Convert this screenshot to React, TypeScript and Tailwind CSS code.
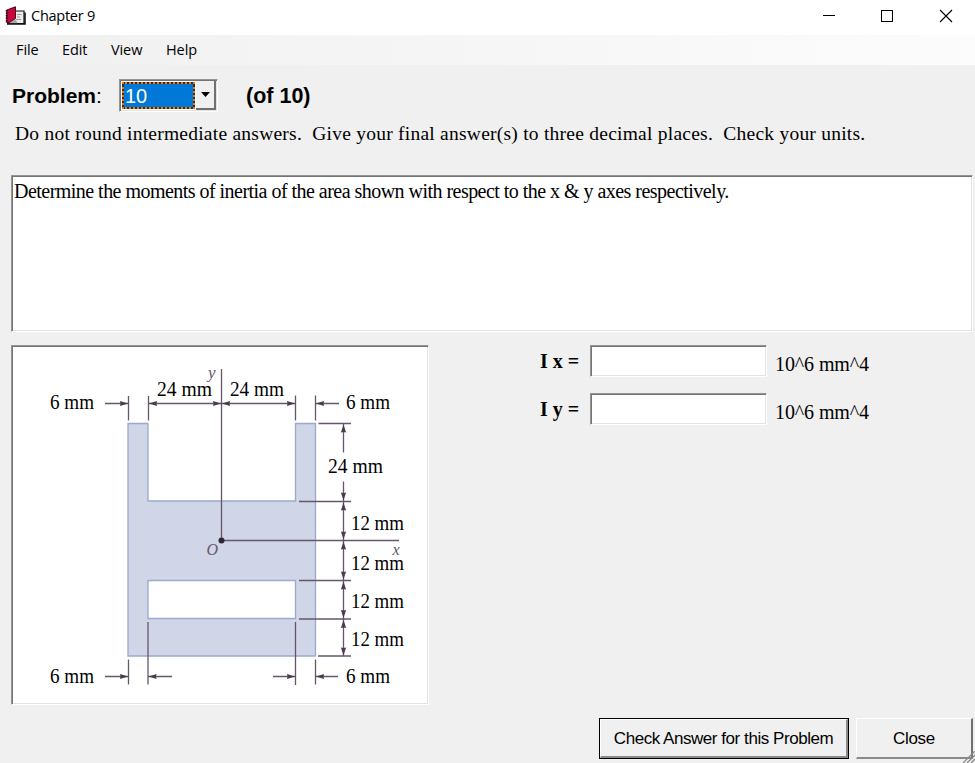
import { useState } from "react";
import clsx from "clsx";

interface MenuItem {
  label: string;
  className: string;
}

const menuItems: MenuItem[] = [
  { label: "File", className: "w-[46px] pl-4" },
  { label: "Edit", className: "w-[49px] pl-4" },
  { label: "View", className: "w-[55px] pl-4" },
  { label: "Help", className: "w-[60px] pl-4" },
];

// classic two-tone 3D edge: dark on top/left, light on bottom/right
const sunken =
  "border border-t-[#949494] border-l-[#949494] border-r-white border-b-white bg-white p-px shadow-[inset_1px_1px_0_#747474,inset_-1px_-1px_0_#e3e3e3]";

const BookIcon = () => (
  <svg width="22" height="20" viewBox="0 0 22 20" className="shrink-0">
    <path d="M10 5H19V17.5H3Z" fill="#ececec" stroke="#111" strokeWidth="1.2" />
    <path d="M12 8.5h4.5M12 11h3M11 13.5h5" stroke="#999" strokeWidth="1" />
    <path d="M4 17L10.5 13.5L13 17.5H4Z" fill="#a9a9a9" />
    <path d="M1.8 4L10.5 0.8V12.5L3.5 17L1.8 16Z" fill="#c9043f" stroke="#4b0516" strokeWidth="1" />
    <path d="M1.6 4V17" stroke="#111" strokeWidth="1.6" strokeDasharray="1.5 1" />
    <path d="M2 18H20V6.5" fill="none" stroke="#111" strokeWidth="1.6" />
  </svg>
);

const TitleBar = () => (
  <header className="flex h-[35px] shrink-0 items-start bg-white font-['Open_Sans','Noto_Sans',sans-serif]">
    <div className="flex items-center pt-[5px] pl-[5px]">
      <BookIcon />
      <span className="ml-1 pt-px text-[14.5px] leading-5 tracking-[-0.25px] text-black">Chapter 9</span>
    </div>
    <div className="ml-auto flex pt-[9px] pr-[21px]">
      <svg width="132" height="14" viewBox="822 9 132 14" shapeRendering="crispEdges" stroke="#000" fill="none">
        <path d="M823 15.5H835" />
        <rect x="881.5" y="10.5" width="11" height="11" />
        <path d="M940 10L952 22M952 10L940 22" shapeRendering="auto" strokeWidth="1.1" />
      </svg>
    </div>
  </header>
);

const MenuBar = () => (
  <nav className="flex h-[30px] shrink-0 items-center bg-linear-to-r from-[#f0f0f0] to-[#fcfcfc] font-['Open_Sans','Noto_Sans',sans-serif] text-[14.5px] leading-5 tracking-[-0.1px] text-black">
    {menuItems.map((item) => (
      <span key={item.label} className={item.className}>
        {item.label}
      </span>
    ))}
  </nav>
);

const ProblemPicker = () => (
  <div className="flex h-[33px] items-center pl-px font-['Liberation_Sans',Arial,sans-serif] text-black">
    <span className="w-[107px] text-[21px] font-bold">
      Problem<span className="font-normal">:</span>
    </span>
    <div className={clsx("flex h-[33px] w-[99px]", sunken)}>
      <div className="m-px h-[27px] w-[73px] bg-[#3d2c1a]">
        <div className="flex h-full items-center border-2 border-dotted border-[#e07a28] bg-[#0078d7] bg-clip-padding pl-px text-[20px] text-white">
          10
        </div>
      </div>
      <div className="flex flex-1 items-center justify-center border-r-2 border-b-2 border-[#707070] bg-[#f0f0f0]">
        <svg width="9" height="5" viewBox="0 0 9 5">
          <path d="M0 0H9L4.5 5Z" />
        </svg>
      </div>
    </div>
    <span className="ml-[28px] pt-px text-[21.5px] font-bold">(of 10)</span>
  </div>
);

type Direction = "left" | "right" | "up" | "down";

const Arrow = ({ x, y, dir }: { x: number; y: number; dir: Direction }) => {
  const angle = { right: 0, down: 90, left: 180, up: 270 }[dir];
  return (
    <path
      d="M0 0L-8 -2.6L-7.5 0L-8 2.6Z"
      fill="#4a3b4e"
      stroke="none"
      transform={`translate(${x} ${y}) rotate(${angle})`}
    />
  );
};

const dimensionLabels = [
  { x: 50, y: 409, text: "6 mm", width: 44 },
  { x: 157, y: 396, text: "24 mm", width: 55 },
  { x: 230, y: 396, text: "24 mm", width: 54 },
  { x: 346, y: 409, text: "6 mm", width: 44 },
  { x: 328, y: 472.5, text: "24 mm", width: 55 },
  { x: 351, y: 530, text: "12 mm", width: 53 },
  { x: 351, y: 570, text: "12 mm", width: 53 },
  { x: 351, y: 607.5, text: "12 mm", width: 53 },
  { x: 351, y: 646, text: "12 mm", width: 53 },
  { x: 50, y: 682.5, text: "6 mm", width: 44 },
  { x: 346, y: 682.5, text: "6 mm", width: 44 },
];

const SectionDiagram = () => (
  <svg width="414" height="356" viewBox="13 347 414 356" className="block">
    <path
      d="M128 423.5H148V501H295.5V423.5H315.5V656H128ZM148 580.5V618.5H295.5V580.5Z"
      fill="#d0d5e7"
      fillRule="evenodd"
      stroke="#9ba9cb"
      strokeWidth="1.3"
    />
    <g stroke="#66566c" strokeWidth="1.3" fill="none">
      {/* axes */}
      <path d="M221.5 369V541M221.5 540.5H399" />
      {/* extension lines */}
      <path d="M128.5 396V420.5M148.5 396V420.5M295.5 395.5V420.5M315.5 395.5V420.5" />
      <path d="M318.5 423.5H351M299 501.5H351M299 580.5H351M299 619H351M318 656H351" />
      <path d="M128.5 659.5V684.5M148 622V684.5M295.5 622V685M315.5 659.5V684.5" />
      {/* dimension lines */}
      <path d="M105 403.5H128M149 403.5H295M316 403.5H339" />
      <path d="M343.5 424V452.5M343.5 481.5V656" />
      <path d="M105 676.5H128M148 676.5H172M273 676.5H295M316 676.5H338" />
    </g>
    <Arrow x={128} y={403.5} dir="right" />
    <Arrow x={149} y={403.5} dir="left" />
    <Arrow x={221} y={403.5} dir="right" />
    <Arrow x={222} y={403.5} dir="left" />
    <Arrow x={295} y={403.5} dir="right" />
    <Arrow x={316} y={403.5} dir="left" />
    <Arrow x={343.5} y={424.5} dir="up" />
    <Arrow x={343.5} y={500.5} dir="down" />
    <Arrow x={343.5} y={502.5} dir="up" />
    <Arrow x={343.5} y={539.5} dir="down" />
    <Arrow x={343.5} y={541.5} dir="up" />
    <Arrow x={343.5} y={579.5} dir="down" />
    <Arrow x={343.5} y={581.5} dir="up" />
    <Arrow x={343.5} y={618} dir="down" />
    <Arrow x={343.5} y={620} dir="up" />
    <Arrow x={343.5} y={655.5} dir="down" />
    <Arrow x={128} y={676.5} dir="right" />
    <Arrow x={148.5} y={676.5} dir="left" />
    <Arrow x={295} y={676.5} dir="right" />
    <Arrow x={316} y={676.5} dir="left" />
    <circle cx="221.5" cy="540.5" r="3" fill="#2f2735" />
    <g fontFamily="'Liberation Serif', 'Times New Roman', serif" fontSize="20" fill="#000">
      {dimensionLabels.map((label) => (
        <text
          key={`${label.x}-${label.y}`}
          x={label.x}
          y={label.y}
          textLength={label.width}
          lengthAdjust="spacingAndGlyphs"
        >
          {label.text}
        </text>
      ))}
    </g>
    <g fontFamily="'Liberation Serif', 'Times New Roman', serif" fontStyle="italic" fill="#66566c">
      <text x="208" y="377.5" fontSize="17">y</text>
      <text x="392.5" y="554.5" fontSize="16">x</text>
      <text x="206.5" y="554.5" fontSize="16">O</text>
    </g>
  </svg>
);

interface AnswerRowProps {
  label: string;
  value: string;
  onChange: (value: string) => void;
}

const AnswerRow = ({ label, value, onChange }: AnswerRowProps) => (
  <div className="flex h-[32px] items-center text-[20px] text-black">
    <span className="w-[51px] pl-px font-bold whitespace-pre">{label}</span>
    <input
      value={value}
      onChange={(e) => onChange(e.target.value)}
      className={clsx("h-[32px] w-[177px] outline-none", sunken)}
    />
    <span className="ml-[8px] pt-[5px] tracking-[-0.1px]">10^6 mm^4</span>
  </div>
);

const ResizeGrip = () => (
  <svg width="12" height="12" viewBox="0 0 12 12" className="absolute right-0 bottom-0">
    <path d="M0 12L12 0M4 12L12 4M8 12L12 8" stroke="#8a8a8a" strokeWidth="1.3" />
  </svg>
);

export default function App() {
  const [ix, setIx] = useState("");
  const [iy, setIy] = useState("");

  return (
    <div className="relative flex h-[763px] w-[975px] flex-col overflow-hidden bg-[#f0f0f0] font-['Liberation_Serif','Times_New_Roman',serif]">
      <TitleBar />
      <MenuBar />
      <main className="flex flex-1 flex-col pt-[14px] pl-[11px]">
        <ProblemPicker />
        <p className="mt-[10px] h-6 pl-[4px] text-[19.5px] leading-6 tracking-[0.24px] whitespace-pre text-black">
          Do not round intermediate answers.  Give your final answer(s) to three decimal places.  Check your units.
        </p>
        <div className={clsx("mt-[29px] h-[157px] w-[962px] text-[20px] leading-7 tracking-[-0.53px] text-black", sunken)}>
          <p className="pl-px">
            Determine the moments of inertia of the area shown with respect to the x &amp; y axes respectively.
          </p>
        </div>
        <div className="mt-[13px] flex">
          <div className={clsx("h-[360px] w-[418px]", sunken)}>
            <SectionDiagram />
          </div>
          <div className="ml-[110px] flex flex-col gap-4">
            <AnswerRow label="I x =" value={ix} onChange={setIx} />
            <AnswerRow label="I y =" value={iy} onChange={setIy} />
          </div>
        </div>
        <div className="mt-[13px] flex justify-end gap-[7px] pr-[2px] font-['Liberation_Sans',Arial,sans-serif] text-[17px] text-black">
          <button className="h-[41px] w-[250px] border-[1.5px] border-black tracking-[-0.45px]">
            <span className="flex h-full items-center justify-center border-t border-r-2 border-b-2 border-l border-t-white border-r-[#8a8a8a] border-b-[#8a8a8a] border-l-white pt-[2px]">
              Check Answer for this Problem
            </span>
          </button>
          <button className="h-[41px] w-[117px] border border-t-white border-r-2 border-r-[#707070] border-b-2 border-b-[#8a8a8a] border-l-white pt-[2px] tracking-[-0.3px]">
            Close
          </button>
        </div>
      </main>
      <ResizeGrip />
    </div>
  );
}
